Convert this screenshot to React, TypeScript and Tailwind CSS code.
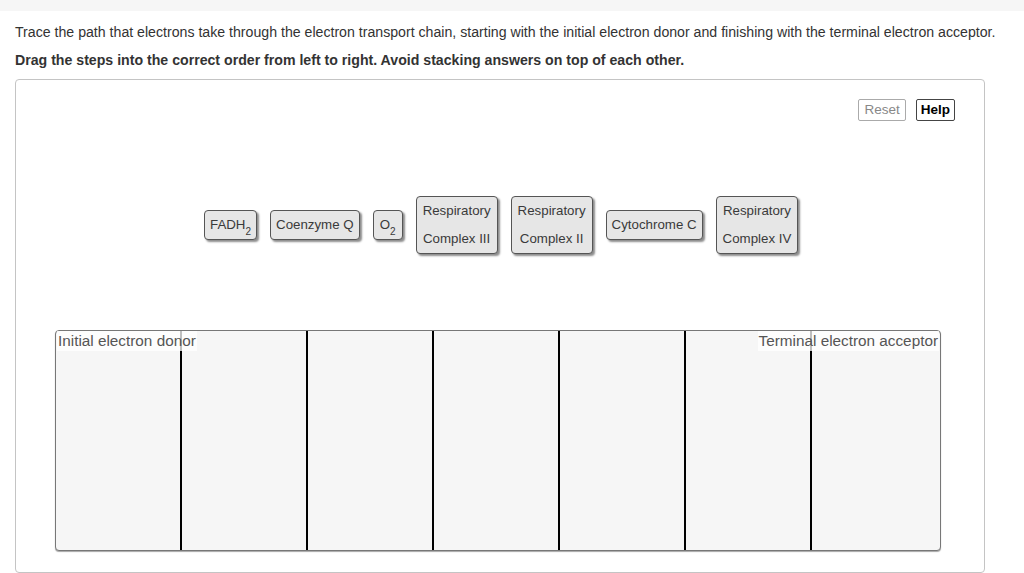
import React from 'react';

type Tile = { lines: React.ReactNode[] };

const tiles: Tile[] = [
    { lines: [<>FADH<sub className="text-[10px] align-[-3px]">2</sub></>] },
    { lines: ['Coenzyme Q'] },
    { lines: [<>O<sub className="text-[10px] align-[-3px]">2</sub></>] },
    { lines: ['Respiratory', 'Complex III'] },
    { lines: ['Respiratory', 'Complex II'] },
    { lines: ['Cytochrome C'] },
    { lines: ['Respiratory', 'Complex IV'] },
];

const App = () => {
    return (
        <div className="w-[1024px] h-[573px] bg-white text-[#333] overflow-hidden" style={{ fontFamily: '"Liberation Sans", Arial, sans-serif' }}>
            <div className="h-[11px] bg-[#f6f6f6]" />

            <div className="px-[15px]">
                <p className="text-[14.15px] leading-[18px] mt-[12px]">
                    Trace the path that electrons take through the electron transport chain, starting with the initial electron donor and finishing with the terminal electron acceptor.
                </p>
                <p className="text-[14.15px] leading-[18px] mt-[10px] font-bold">
                    Drag the steps into the correct order from left to right. Avoid stacking answers on top of each other.
                </p>

                {/* drag and drop panel */}
                <div className="mt-[10px] w-[970px] h-[494px] border border-[#c4c4c4] rounded-[4px] flex flex-col">
                    <div className="flex justify-end gap-[10px] pt-[19px] pr-[29px]">
                        <button className="h-[22px] px-[5px] border border-[#aaa] rounded-[2px] text-[13.5px] text-[#888] leading-[20px]">Reset</button>
                        <button className="h-[22px] px-[4px] border border-[#444] rounded-[2px] text-[13.5px] font-bold text-black leading-[20px]">Help</button>
                    </div>

                    <div className="mt-[75px] h-[58px] pl-[188px] flex items-center gap-[13px]">
                        {tiles.map((t, i) => (
                            <div
                                key={i}
                                className={
                                    'min-w-[30px] bg-[#e6e6e6] border border-[#555] rounded-[4px] text-[13.3px] leading-[28px] text-center text-[#3a3a3a] shadow-[2px_2px_2px_rgba(0,0,0,0.45)] ' +
                                    (t.lines.length > 1 ? 'px-[6px]' : 'px-[5px]')
                                }
                            >
                                {t.lines.map((l, j) => (
                                    <div key={j}>{l}</div>
                                ))}
                            </div>
                        ))}
                    </div>

                    {/* answer slots */}
                    <div className="relative ml-[39px] mt-[76px] w-[886px] h-[221px] border border-[#777] rounded-[4px] bg-[#f6f6f6] grid grid-cols-[126px_126px_126px_126px_126px_126px_1fr] shadow-[0_1px_1px_rgba(0,0,0,0.35)]">
                        {Array.from({ length: 7 }).map((_, i) => (
                            <div key={i} className={i === 6 ? '' : 'border-r-2 border-black'} />
                        ))}
                        <span className="absolute left-[1px] top-0 px-[1px] bg-white/75 text-[15.3px] leading-[20px] text-[#555]">Initial electron donor</span>
                        <span className="absolute right-[1px] top-0 px-[1px] bg-white/75 text-[15.3px] leading-[20px] text-[#555]">Terminal electron acceptor</span>
                    </div>
                </div>
            </div>
        </div>
    );
};

export default App;
